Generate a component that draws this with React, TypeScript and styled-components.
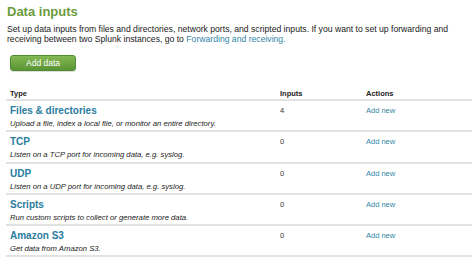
import React from "react";
import styled, { createGlobalStyle } from "styled-components";

const Global = createGlobalStyle`
  html, body { margin: 0; padding: 0; background: #fff; }
  body { font-family: "Liberation Sans", Arial, sans-serif; color: #222; }
`;

const Page = styled.div`
  padding: 4px 2px 0 7px;
  width: 474px;
  box-sizing: border-box;
`;

const Title = styled.h1`
  margin: 0;
  font-size: 13px;
  line-height: 15px;
  font-weight: bold;
  color: #6b9c3c;
`;

const Intro = styled.p`
  margin: 5px 0 0;
  font-size: 8.65px;
  line-height: 10px;
  color: #222;
  width: 460px;
`;

const Link = styled.a`
  color: #3286a6;
  text-decoration: none;
`;

const Button = styled.button`
  display: block;
  margin: 11px 0 0 3px;
  width: 66px;
  height: 16px;
  border: 1px solid #4f8a2e;
  border-radius: 3px;
  background: linear-gradient(#84b855, #5a9434);
  color: #fff;
  font-family: "Liberation Sans", Arial, sans-serif;
  font-size: 8.5px;
  padding: 0;
  box-shadow: 0 1px 1px rgba(0, 0, 0, 0.15);
`;

const Table = styled.div`
  margin-top: 14px;
  margin-left: -1px;
  width: 466px;
`;

const Cols = styled.div`
  display: grid;
  grid-template-columns: 270px 86px 1fr;
  padding-left: 4px;
  box-sizing: border-box;
  border-bottom: 2px solid #e2e2e2;
`;

const HeadRow = styled(Cols)`
  height: 16px;
  padding-top: 4px;
  font-size: 7.5px;
  font-weight: bold;
  line-height: 10px;
  color: #222;
`;

const Row = styled(Cols)`
  height: 31.3px;
  padding-top: 4px;
  align-items: start;
`;

const TypeName = styled.a`
  display: block;
  font-size: 10px;
  line-height: 12px;
  font-weight: bold;
  color: #2a7c9e;
  text-decoration: none;
`;

const TypeDesc = styled.div`
  margin-top: 2px;
  font-size: 7.7px;
  line-height: 10px;
  font-style: italic;
  color: #222;
`;

const Count = styled.div`
  padding-top: 1px;
  font-size: 7.5px;
  line-height: 10px;
  color: #333;
`;

const Action = styled.a`
  display: block;
  padding-top: 1px;
  font-size: 7.5px;
  line-height: 10px;
  color: #3286a6;
  text-decoration: none;
`;

const inputs = [
  { name: "Files & directories", desc: "Upload a file, index a local file, or monitor an entire directory.", count: 4 },
  { name: "TCP", desc: "Listen on a TCP port for incoming data, e.g. syslog.", count: 0 },
  { name: "UDP", desc: "Listen on a UDP port for incoming data, e.g. syslog.", count: 0 },
  { name: "Scripts", desc: "Run custom scripts to collect or generate more data.", count: 0 },
  { name: "Amazon S3", desc: "Get data from Amazon S3.", count: 0 },
];

export default function App() {
  return (
    <Page>
      <Global />
      <Title>Data inputs</Title>
      <Intro>
        Set up data inputs from files and directories, network ports, and scripted inputs. If you want to set up
        forwarding and receiving between two Splunk instances, go to <Link href="#">Forwarding and receiving.</Link>
      </Intro>
      <Button>Add data</Button>
      <Table>
        <HeadRow>
          <div>Type</div>
          <div>Inputs</div>
          <div>Actions</div>
        </HeadRow>
        {inputs.map((i) => (
          <Row key={i.name}>
            <div>
              <TypeName href="#">{i.name}</TypeName>
              <TypeDesc>{i.desc}</TypeDesc>
            </div>
            <Count>{i.count}</Count>
            <Action href="#">Add new</Action>
          </Row>
        ))}
      </Table>
    </Page>
  );
}
